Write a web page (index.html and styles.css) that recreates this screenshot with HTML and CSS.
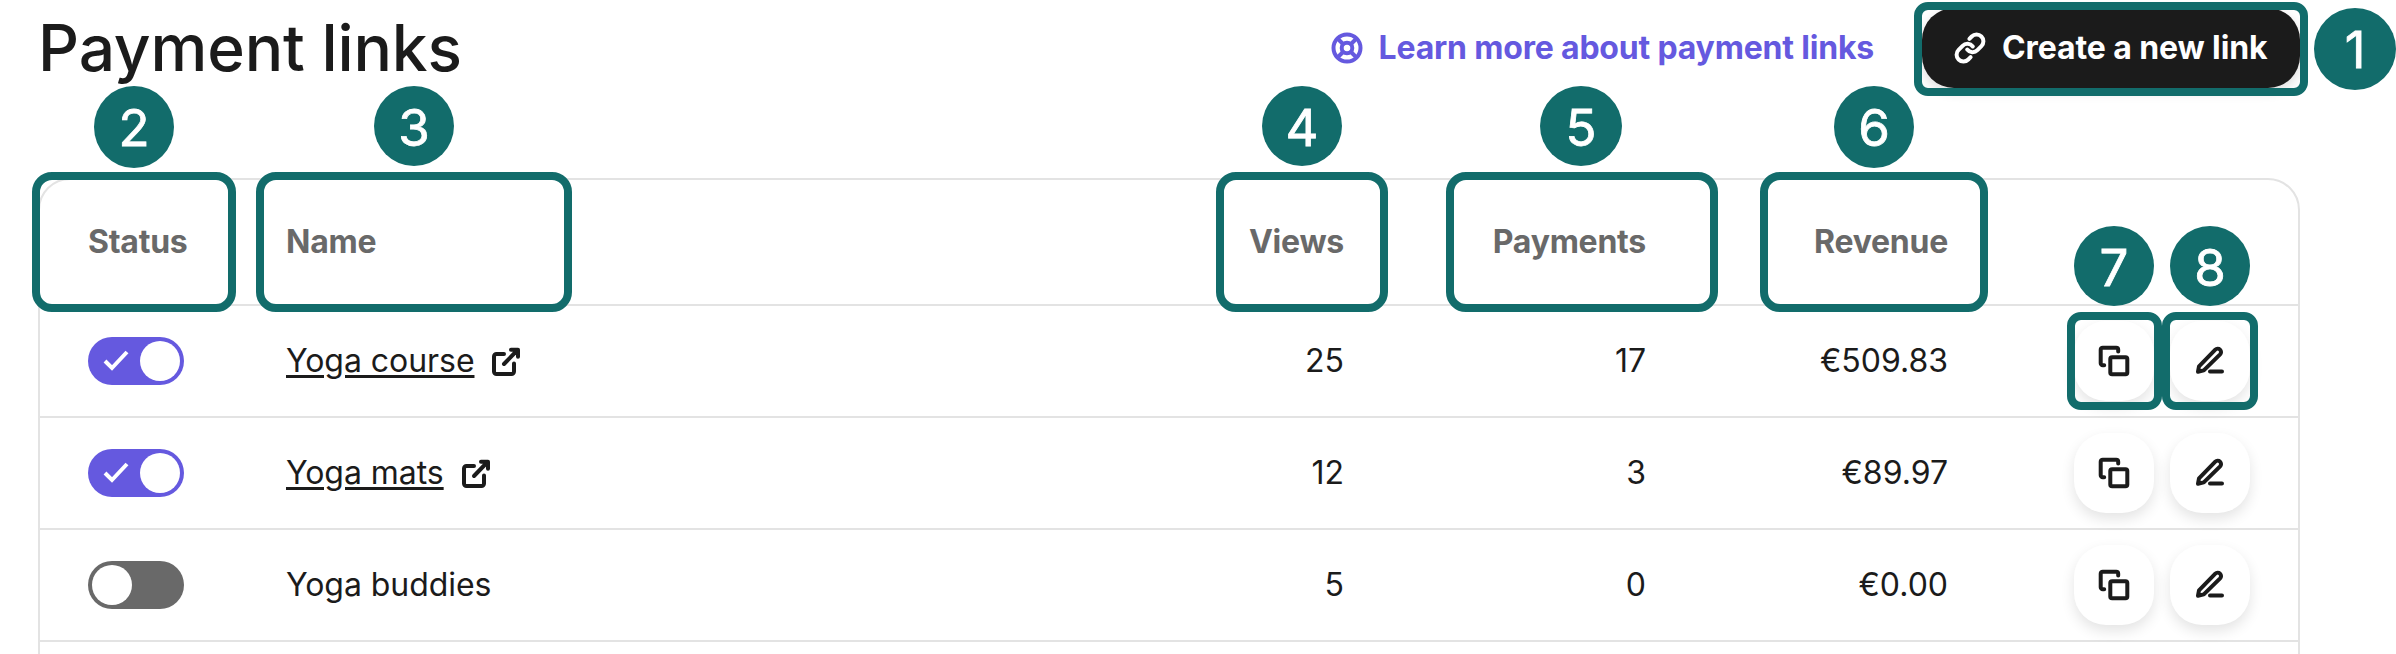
FILE: index.html
```
<!DOCTYPE html>
<html lang="en">
<head>
<meta charset="utf-8">
<title>Payment links</title>
<link rel="stylesheet" href="styles.css">
</head>
<body>
<svg class="defs" aria-hidden="true">
  <symbol id="i-link" viewBox="0 0 32 32"><path d="M13.200 17.600a6.800 6.800 0 0 0 10.200.6l4-4A6.800 6.800 0 0 0 17.700 4.500l-2.300 2.300M18.800 14.400a6.800 6.800 0 0 0-10.200-.6l-4 4a6.800 6.800 0 0 0 9.700 9.700l2.300-2.300"/></symbol>
  <symbol id="i-help" viewBox="0 0 32 32"><circle cx="16" cy="16" r="13.500"/><circle cx="16" cy="16" r="5.300"/><path d="m7 7 5 5M25 7l-5 5M7 25l5-5M25 25l-5-5"/></symbol>
  <symbol id="i-open" viewBox="0 0 32 32"><path d="M14 9H6.500A2.500 2.500 0 0 0 4 11.500v15A2.500 2.500 0 0 0 6.500 29h15a2.500 2.500 0 0 0 2.500-2.500V18.500M14 19 27.500 5M21 4.800h7v7"/></symbol>
  <symbol id="i-copy" viewBox="0 0 32 32"><rect x="12.300" y="12.200" width="17" height="17" rx="1.800"/><path d="M6.200 20.200H4.700A2 2 0 0 1 2.700 18.200v-13.500a2 2 0 0 1 2-2h13.500a2 2 0 0 1 2 2v1.700"/></symbol>
  <symbol id="i-edit" viewBox="0 0 32 32"><path d="M4 26.700 5 21.300 21.300 4.700a3.100 3.100 0 0 1 4.800 4.600L9.800 25.400zM16 26.500h12"/></symbol>
  <symbol id="i-check" viewBox="0 0 26 22"><path d="m2 12 7 7L24 3"/></symbol>
</svg>
<main class="page">
  <header class="head">
    <h1 class="title">Payment links</h1>
    <a class="learn"><svg class="icon"><use href="#i-help"/></svg><span>Learn more about payment links</span></a>
    <button class="create"><svg class="icon"><use href="#i-link"/></svg><span>Create a new link</span></button>
  </header>
  <section class="table">
    <div class="row row-head">
      <span>Status</span><span>Name</span><span class="num">Views</span><span class="num">Payments</span><span class="num">Revenue</span><span></span>
    </div>
    <div class="row">
      <span class="toggle on"><svg class="check"><use href="#i-check"/></svg><i class="knob"></i></span>
      <span class="name"><a class="link">Yoga course</a><svg class="icon"><use href="#i-open"/></svg></span>
      <span class="num">25</span><span class="num">17</span><span class="num">€509.83</span>
      <span class="actions"><button class="act"><svg class="icon"><use href="#i-copy"/></svg></button><button class="act"><svg class="icon"><use href="#i-edit"/></svg></button></span>
    </div>
    <div class="row">
      <span class="toggle on"><svg class="check"><use href="#i-check"/></svg><i class="knob"></i></span>
      <span class="name"><a class="link">Yoga mats</a><svg class="icon"><use href="#i-open"/></svg></span>
      <span class="num">12</span><span class="num">3</span><span class="num">€89.97</span>
      <span class="actions"><button class="act"><svg class="icon"><use href="#i-copy"/></svg></button><button class="act"><svg class="icon"><use href="#i-edit"/></svg></button></span>
    </div>
    <div class="row">
      <span class="toggle"><i class="knob"></i></span>
      <span class="name">Yoga buddies</span>
      <span class="num">5</span><span class="num">0</span><span class="num">€0.00</span>
      <span class="actions"><button class="act"><svg class="icon"><use href="#i-copy"/></svg></button><button class="act"><svg class="icon"><use href="#i-edit"/></svg></button></span>
    </div>
    <div class="row"></div>
  </section>
  <div class="box b1"></div><div class="box b2"></div><div class="box b3"></div><div class="box b4"></div>
  <div class="box b5"></div><div class="box b6"></div><div class="box b7"></div><div class="box b8"></div>
  <span class="badge n1">1</span><span class="badge n2">2</span><span class="badge n3">3</span><span class="badge n4">4</span>
  <span class="badge n5">5</span><span class="badge n6">6</span><span class="badge n7">7</span><span class="badge n8">8</span>
</main>
</body>
</html>
```
FILE: styles.css
```
* { box-sizing: border-box; }
body { margin: 0; background: #fff; }
.page {
  position: relative;
  width: 2396px;
  height: 654px;
  padding: 8px 96px 0 38px;
  overflow: hidden;
  background: #fff;
  color: #1b1b1b;
  font: 400 32px/40px Inter, "Liberation Sans", sans-serif;
}
.defs { position: absolute; width: 0; height: 0; }
.icon {
  width: 32px;
  height: 32px;
  flex: none;
  overflow: visible;
  fill: none;
  stroke: currentColor;
  stroke-width: 4;
  stroke-linecap: round;
  stroke-linejoin: round;
}
button { border: 0; padding: 0; font: inherit; color: inherit; }

.head { display: flex; align-items: center; height: 80px; }
.title { margin: 0 auto 0 0; font-size: 64px; line-height: 80px; font-weight: 500; letter-spacing: -0.15px; }
.learn { display: flex; align-items: center; gap: 16px; margin-right: 48px; color: #6559df; font-weight: 700; letter-spacing: -0.19px; white-space: nowrap; }
.create {
  display: flex;
  align-items: center;
  gap: 16px;
  width: 378px;
  height: 80px;
  padding-left: 32px;
  border-radius: 32px;
  background: #1b1b1b;
  color: #fff;
  font-weight: 700;
  letter-spacing: -0.1px;
  white-space: nowrap;
  box-shadow: 0 4px 12px rgba(0, 0, 0, .14);
}

.table { margin-top: 90px; height: 560px; border: 2px solid #e3e3e3; border-radius: 32px; }
.row {
  display: grid;
  grid-template-columns: 198px 712px 346px 302px 302px 1fr;
  align-items: center;
  height: 112px;
  padding: 0 48px;
  border-bottom: 2px solid #e3e3e3;
}
.row-head { height: 126px; color: #696969; font-weight: 700; letter-spacing: -0.25px; }
.num { text-align: right; }
.name { display: flex; align-items: center; gap: 16px; letter-spacing: -0.05px; }
.link { text-decoration: underline; text-decoration-thickness: 3px; text-underline-offset: 3px; }

.toggle { display: flex; align-items: center; width: 96px; height: 48px; padding: 4px; border-radius: 24px; background: #696969; }
.toggle.on { justify-content: space-between; padding-left: 15px; background: #6559df; }
.knob { width: 40px; height: 40px; border-radius: 50%; background: #fff; }
.check { width: 26px; height: 22px; margin-top: -3px; fill: none; stroke: #fff; stroke-width: 4; }

.actions { display: flex; justify-content: flex-end; gap: 16px; }
.act {
  display: flex;
  align-items: center;
  justify-content: center;
  width: 80px;
  height: 80px;
  border-radius: 32px;
  background: #fff;
  box-shadow: 0 6px 14px rgba(0, 0, 0, .11);
}

/* Numbered callouts over the interface */
.box { position: absolute; top: 172px; height: 140px; border: 8px solid #126c6b; border-radius: 20px; }
.b1 { left: 1914px; top: 2px; width: 394px; height: 94px; border-radius: 14px; }
.b2 { left: 32px; width: 204px; }
.b3 { left: 256px; width: 316px; }
.b4 { left: 1216px; width: 172px; }
.b5 { left: 1446px; width: 272px; }
.b6 { left: 1760px; width: 228px; }
.b7 { left: 2067px; top: 312px; width: 95px; height: 98px; border-radius: 14px; }
.b8 { left: 2162px; top: 312px; width: 96px; height: 98px; border-radius: 14px; }
.badge {
  position: absolute;
  top: 86px;
  width: 80px;
  height: 80px;
  border-radius: 50%;
  background: #126c6b;
  color: #fff;
  font-size: 51px;
  font-weight: 400;
  -webkit-text-stroke: 0.8px #fff;
  line-height: 84px;
  text-align: center;
}
.n1 { left: 2314px; top: 8px; width: 82px; height: 82px; }
.n2 { left: 94px; height: 82px; }
.n3 { left: 374px; }
.n4 { left: 1262px; }
.n5 { left: 1540px; width: 82px; }
.n6 { left: 1834px; height: 82px; }
.n7 { left: 2074px; top: 226px; }
.n8 { left: 2170px; top: 226px; }
```
